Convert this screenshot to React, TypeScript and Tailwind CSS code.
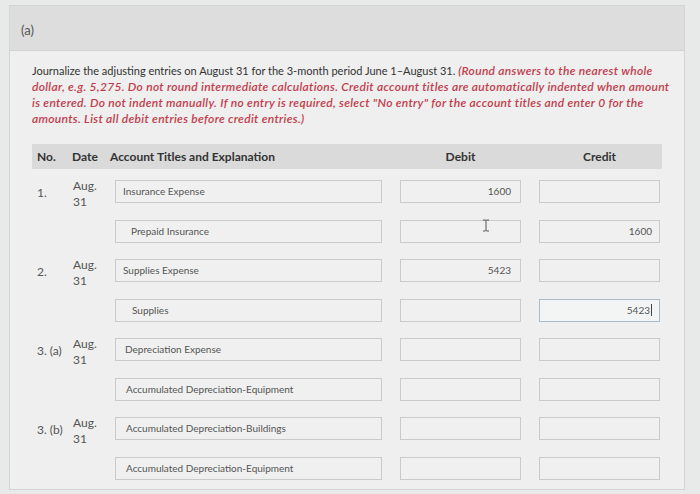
import React from 'react';

type Row = {
  no?: string;
  date?: boolean;
  account: string;
  indent: string;
  debit?: string;
  credit?: string;
  focused?: boolean;
  cursor?: boolean;
};

const rows: Row[] = [
  { no: '1.', date: true, account: 'Insurance Expense', indent: 'pl-[7px]', debit: '1600' },
  { account: 'Prepaid Insurance', indent: 'pl-[15px]', credit: '1600', cursor: true },
  { no: '2.', date: true, account: 'Supplies Expense', indent: 'pl-[7px]', debit: '5423' },
  { account: 'Supplies', indent: 'pl-[16px]', credit: '5423', focused: true },
  { no: '3. (a)', date: true, account: 'Depreciation Expense', indent: 'pl-[9px]' },
  { account: 'Accumulated Depreciation-Equipment', indent: 'pl-[10px]' },
  { no: '3. (b)', date: true, account: 'Accumulated Depreciation-Buildings', indent: 'pl-[10px]' },
  { account: 'Accumulated Depreciation-Equipment', indent: 'pl-[10px]' },
];

function IBeam() {
  return (
    <svg className="absolute left-[81px] top-[-2px]" width="8" height="13" viewBox="0 0 8 13">
      <path d="M1 1h2.5L4 1.6 4.5 1H7M4 1.6v9.8M1 12h2.5L4 11.4 4.5 12H7" stroke="#555" strokeWidth="1" fill="none" />
    </svg>
  );
}

function JournalRow({ row }: { row: Row }) {
  return (
    <div className="flex h-[23px] items-start pl-[5px]">
      <div className="w-[35px] h-[23px] flex items-center pt-[2px] text-[12px] text-[#555]">{row.no}</div>
      <div className="w-[43px] -mt-[2px] leading-[16px] text-[12px] text-[#555] pl-[1px]">
        {row.date && (
          <>
            <div>Aug.</div>
            <div>31</div>
          </>
        )}
      </div>
      <div className={`w-[267px] h-[23px] border border-[#c9cbca] bg-[#eff0ef] flex items-center text-[10px] text-[#555] ${row.indent}`}>
        {row.account}
      </div>
      <div className="relative ml-[18px] w-[121px] h-[23px] border border-[#c9cbca] bg-[#eff0ef] flex items-center justify-end pr-[9px] text-[10px] text-[#555]">
        {row.debit}
        {row.cursor && <IBeam />}
      </div>
      <div
        className={`ml-[18px] w-[121px] h-[23px] border flex items-center justify-end pr-[7px] text-[10px] text-[#555] ${
          row.focused ? 'border-[#a9bccb] bg-[#f3f5f5]' : 'border-[#c9cbca] bg-[#eff0ef]'
        }`}
      >
        {row.credit}
        {row.focused && <span className="w-px h-[12px] bg-[#444] ml-[1px]" />}
      </div>
    </div>
  );
}

export default function App() {
  return (
    <div
      className="w-[700px] h-[494px] overflow-hidden bg-[#e8e9e9] pt-[5px] pl-[9px] pr-[15px]"
      style={{ fontFamily: 'Lato, "Open Sans", sans-serif' }}
    >
      <div className="h-[485px] border border-[#d3d4d4] bg-[#eeefee]">
        <div className="h-[45px] bg-[#dcdddc] border-b border-[#d0d1d0] flex items-center px-[11px] pt-[5px] text-[13px] text-[#555]">
          (a)
        </div>
        <div className="pl-[22px] pr-[12px] pt-[12px]">
          <p className="text-[11px] leading-[16px] text-[#333]">
            Journalize the adjusting entries on August 31 for the 3-month period June 1–August 31.{' '}
            <span className="italic font-semibold text-[12px] tracking-[0.3px] text-[#c33c4d]">
              (Round answers to the nearest whole dollar, e.g. 5,275. Do not round intermediate calculations. Credit account
              titles are automatically indented when amount is entered. Do not indent manually. If no entry is required,
              select "No entry" for the account titles and enter 0 for the amounts. List all debit entries before credit
              entries.)
            </span>
          </p>

          <div className="mt-[17px] w-[630px] h-[25px] bg-[#d9dad9] flex items-center text-[12px] font-bold text-[#333]">
            <div className="pl-[5px] w-[40px]">No.</div>
            <div className="w-[38px]">Date</div>
            <div className="w-[290px]">Account Titles and Explanation</div>
            <div className="w-[121px] text-center">Debit</div>
            <div className="ml-[18px] w-[121px] text-center">Credit</div>
          </div>

          <div className="mt-[11px] flex flex-col gap-[16.5px]">
            {rows.map((r, i) => (
              <JournalRow key={i} row={r} />
            ))}
          </div>
        </div>
      </div>
    </div>
  );
}
